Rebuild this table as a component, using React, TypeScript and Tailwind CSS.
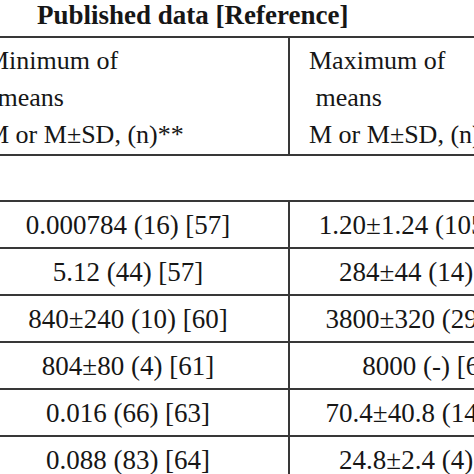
import React from "react";

const rows: [string, string][] = [
  ["0.000784 (16) [57]", "1.20±1.24 (105) [58]"],
  ["5.12 (44) [57]", "284±44 (14) [59]"],
  ["840±240 (10) [60]", "3800±320 (29) [60]"],
  ["804±80 (4) [61]", "8000 (-) [62]"],
  ["0.016 (66) [63]", "70.4±40.8 (14) [63]"],
  ["0.088 (83) [64]", "24.8±2.4 (4) [65]"],
];

export default function App() {
  return (
    <div className="w-[474px] h-[474px] overflow-hidden bg-white text-[#161616] [font-family:'Liberation_Serif',serif]">
      <div className="ml-[-32px] w-[606px] flex flex-col">
        <div className="h-[36px] pl-[69px] text-[27px] font-bold leading-[30px] whitespace-nowrap">
          Published data [Reference]
        </div>
        <div className="flex border-t-2 border-b-2 border-[#383838] h-[120px]">
          <div className="w-[320px] pl-[18px] pt-[4px] text-[26px] leading-[37px] whitespace-nowrap">
            <div>Minimum of</div>
            <div className="pl-[5px]">&nbsp;means</div>
            <div>M or M±SD, (n)**</div>
          </div>
          <div className="w-[286px] border-l-2 border-[#383838] pl-[19px] pt-[4px] text-[26px] leading-[37px] whitespace-nowrap">
            <div>Maximum of</div>
            <div>&nbsp;means</div>
            <div>M or M±SD, (n)**</div>
          </div>
        </div>
        <div className="h-[46px] border-b-2 border-[#383838]" />
        {rows.map(([a, b], i) => (
          <div key={i} className="flex h-[47px] border-b-2 border-[#383838] text-[27px] whitespace-nowrap">
            <div className="w-[320px] flex items-center justify-center pt-[1px]">{a}</div>
            <div className="w-[286px] border-l-2 border-[#383838] flex items-center justify-center pt-[1px]">{b}</div>
          </div>
        ))}
      </div>
    </div>
  );
}
